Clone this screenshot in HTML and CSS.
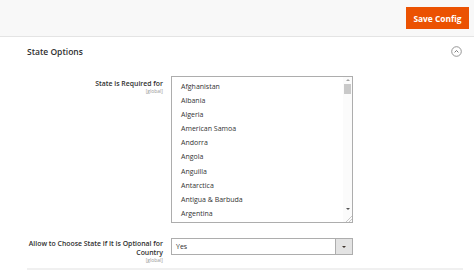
FILE: index.html
```html
<!DOCTYPE html>
<html>
<head>
<meta charset="utf-8">
<link rel="stylesheet" href="styles.css">
</head>
<body>
<div class="topbar">
  <button class="save">Save Config</button>
</div>
<div class="section">
  <div class="section-head">
    <span class="section-title">State Options</span>
    <svg class="collapse" width="11" height="11" viewBox="0 0 11 11">
      <circle cx="5.5" cy="5.5" r="4.8" fill="none" stroke="#8a8a8a" stroke-width="0.9"/>
      <path d="M3.6 6.4 L5.5 4.5 L7.4 6.4" fill="none" stroke="#6a6a6a" stroke-width="0.9"/>
    </svg>
  </div>
  <div class="row">
    <div class="label">
      <div class="label-text">State is Required for</div>
      <div class="scope">[global]</div>
    </div>
    <div class="control">
      <div class="listbox">
        <div class="items">
          <div>Afghanistan</div>
          <div>Albania</div>
          <div>Algeria</div>
          <div>American Samoa</div>
          <div>Andorra</div>
          <div>Angola</div>
          <div>Anguilla</div>
          <div>Antarctica</div>
          <div>Antigua &amp; Barbuda</div>
          <div>Argentina</div>
        </div>
        <div class="scrollbar">
          <div class="arrow up"></div>
          <div class="thumb"></div>
          <div class="track"></div>
          <div class="arrow down"></div>
          <div class="grip"></div>
        </div>
      </div>
    </div>
  </div>
  <div class="row row2">
    <div class="label">
      <div class="label-text">Allow to Choose State if It is Optional for<br>Country</div>
      <div class="scope">[global]</div>
    </div>
    <div class="control">
      <div class="select">
        <span class="select-value">Yes</span>
        <span class="select-btn"><span class="caret"></span></span>
      </div>
    </div>
  </div>
  <div class="bottom-line"></div>
</div>
</body>
</html>
```
FILE: styles.css
```css
html, body {
  margin: 0;
  padding: 0;
  background: #ffffff;
  font-family: "Open Sans", "Noto Sans", sans-serif;
  color: #303030;
  width: 474px;
  height: 271px;
  overflow: hidden;
}
.topbar {
  height: 36px;
  background: #f8f8f8;
  border-bottom: 1px solid #e4e4e4;
  display: flex;
  justify-content: flex-end;
  align-items: flex-start;
  padding-right: 5px;
}
.save {
  margin-top: 7px;
  width: 63px;
  height: 22px;
  background: #eb5202;
  border: 0;
  color: #ffffff;
  font-family: "Open Sans", sans-serif;
  font-weight: 700;
  font-size: 8.4px;
  padding: 0;
}
.section {
  padding: 0 11px 0 27px;
}
.section-head {
  height: 28px;
  display: flex;
  align-items: center;
  justify-content: space-between;
  padding-right: 1px;
}
.section-title {
  font-weight: 600;
  font-size: 8.5px;
  color: #303030;
}
.collapse {
  display: block;
}
.row {
  display: flex;
  margin-top: 11px;
}
.label {
  width: 136px;
  text-align: right;
  padding-top: 3px;
  white-space: nowrap;
}
.label-text {
  font-weight: 600;
  font-size: 6.9px;
  line-height: 9px;
  color: #303030;
}
.scope {
  font-size: 5px;
  line-height: 7px;
  color: #999;
}
.control {
  margin-left: 8px;
}
.listbox {
  width: 180px;
  height: 145px;
  border: 1px solid #adadad;
  display: flex;
  box-sizing: content-box;
}
.items {
  flex: 1;
  padding: 3px 0 0 9px;
  font-size: 7px;
  color: #333;
}
.items div {
  height: 14.1px;
  line-height: 14px;
}
.scrollbar {
  width: 9px;
  display: flex;
  flex-direction: column;
  align-items: center;
  padding-top: 2px;
  background: #fbfbfb;
}
.arrow {
  width: 0;
  height: 0;
  border-left: 2px solid transparent;
  border-right: 2px solid transparent;
}
.arrow.up {
  border-bottom: 2px solid #a3a3a3;
  margin-bottom: 3px;
}
.arrow.down {
  border-top: 2px solid #555;
  margin-bottom: 6px;
}
.thumb {
  width: 7px;
  height: 10px;
  background: #c9c9c9;
}
.track {
  flex: 1;
}
.grip {
  width: 9px;
  height: 6px;
  background: linear-gradient(135deg, transparent 55%, #c8c8c8 55%, #c8c8c8 62%, transparent 62%, transparent 75%, #c8c8c8 75%, #c8c8c8 82%, transparent 82%);
}
.row2 {
  margin-top: 15px;
}
.row2 .label {
  padding-top: 1px;
}
.select {
  width: 180px;
  height: 15px;
  border: 1px solid #adadad;
  display: flex;
  align-items: stretch;
}
.select-value {
  flex: 1;
  font-size: 7px;
  line-height: 15px;
  padding-left: 4px;
  color: #303030;
}
.select-btn {
  width: 16px;
  background: #e3e3e3;
  border-left: 1px solid #adadad;
  display: flex;
  align-items: center;
  justify-content: center;
}
.caret {
  width: 0;
  height: 0;
  border-left: 2px solid transparent;
  border-right: 2px solid transparent;
  border-top: 2.5px solid #41362f;
}
.bottom-line {
  margin-top: 4px;
  height: 2px;
  background: #f0f0f0;
}
```
